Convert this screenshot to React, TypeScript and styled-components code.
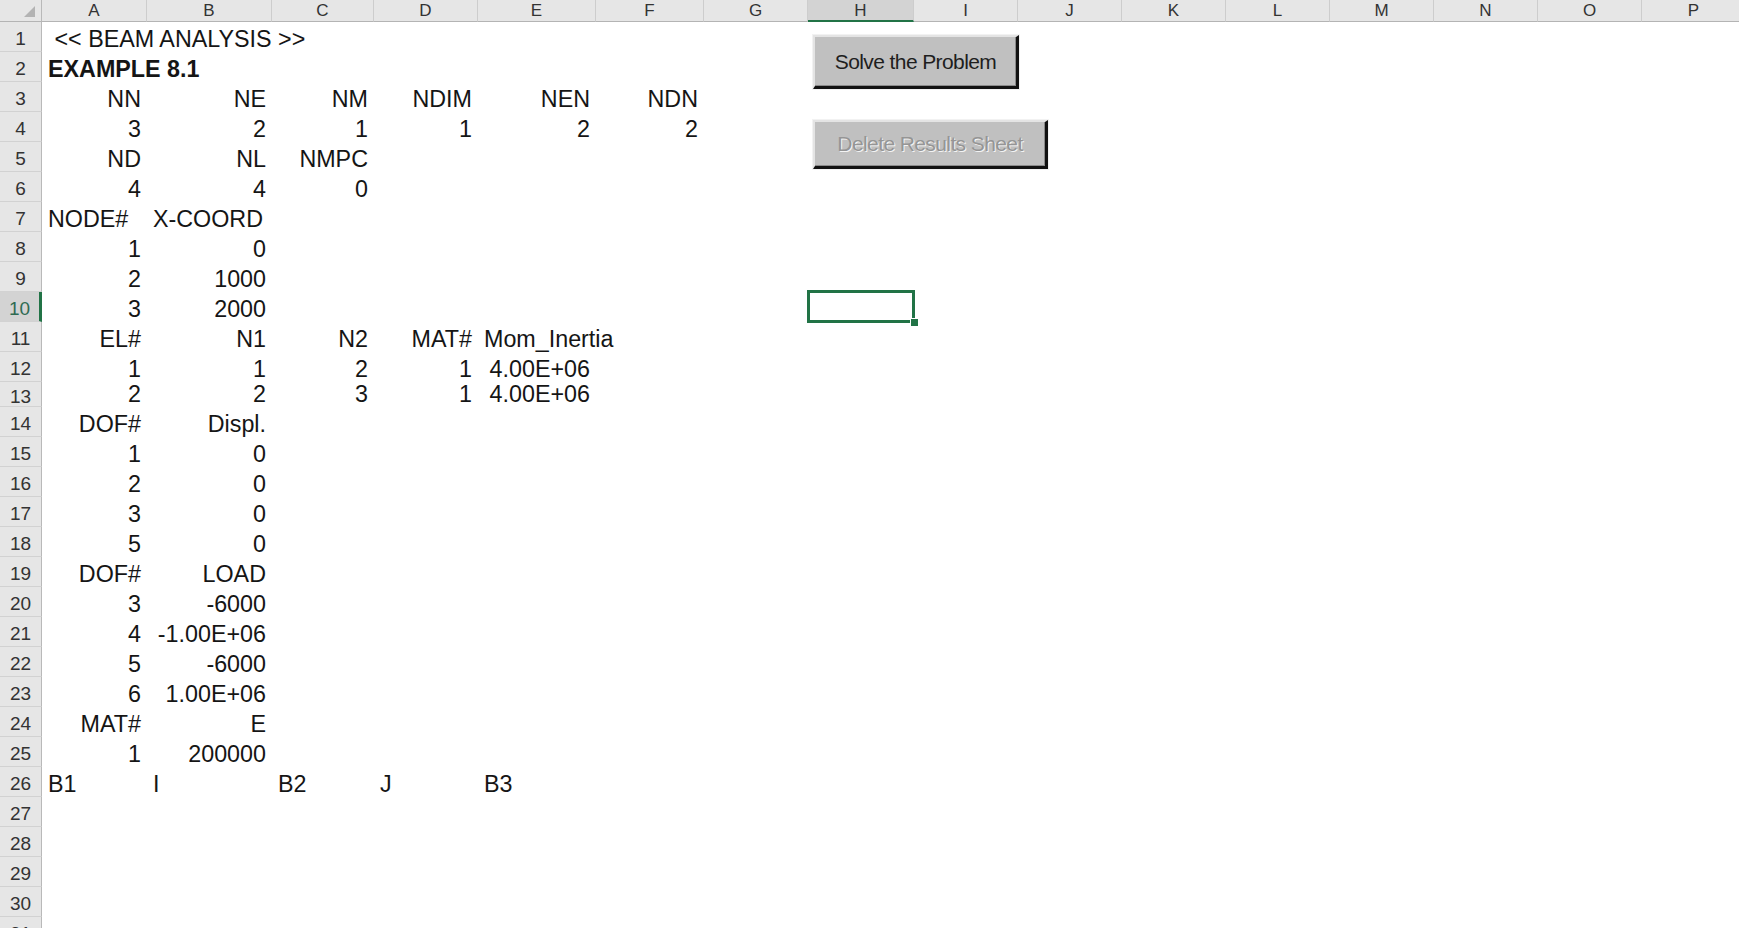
import React from "react";
import styled, { createGlobalStyle, css } from "styled-components";

type CellValue = { t: string; a: "l" | "r"; b?: boolean };

const r = (t: string): CellValue => ({ t, a: "r" });
const l = (t: string): CellValue => ({ t, a: "l" });

const COLS = ["A", "B", "C", "D", "E", "F", "G", "H", "I", "J", "K", "L", "M", "N", "O", "P"];
const WIDTHS = [105, 125, 102, 104, 118, 108, 104, 106, 104, 104, 104, 104, 104, 104, 104, 104];
const ROW_COUNT = 31;
const ACTIVE = { row: 10, col: 7 };

const data: Record<number, (CellValue | null)[]> = {
  1: [l(" << BEAM ANALYSIS >>")],
  2: [{ t: "EXAMPLE 8.1", a: "l", b: true }],
  3: [r("NN"), r("NE"), r("NM"), r("NDIM"), r("NEN"), r("NDN")],
  4: [r("3"), r("2"), r("1"), r("1"), r("2"), r("2")],
  5: [r("ND"), r("NL"), r("NMPC")],
  6: [r("4"), r("4"), r("0")],
  7: [l("NODE#"), l("X-COORD")],
  8: [r("1"), r("0")],
  9: [r("2"), r("1000")],
  10: [r("3"), r("2000")],
  11: [r("EL#"), r("N1"), r("N2"), r("MAT#"), l("Mom_Inertia")],
  12: [r("1"), r("1"), r("2"), r("1"), r("4.00E+06")],
  13: [r("2"), r("2"), r("3"), r("1"), r("4.00E+06")],
  14: [r("DOF#"), r("Displ.")],
  15: [r("1"), r("0")],
  16: [r("2"), r("0")],
  17: [r("3"), r("0")],
  18: [r("5"), r("0")],
  19: [r("DOF#"), r("LOAD")],
  20: [r("3"), r("-6000")],
  21: [r("4"), r("-1.00E+06")],
  22: [r("5"), r("-6000")],
  23: [r("6"), r("1.00E+06")],
  24: [r("MAT#"), r("E")],
  25: [r("1"), r("200000")],
  26: [l("B1"), l("I"), l("B2"), l("J"), l("B3")],
};

const rowHeight = (row: number) => (row === 13 ? 25 : 30);

const GlobalStyle = createGlobalStyle`
  html, body {
    margin: 0;
    padding: 0;
    background: #ffffff;
    overflow: hidden;
  }
  body {
    font-family: "Liberation Sans", Arial, sans-serif;
  }
`;

const Sheet = styled.div`
  position: relative;
  display: grid;
  grid-template-columns: 42px ${WIDTHS.map((w) => `${w}px`).join(" ")};
  grid-template-rows: 22px ${Array.from({ length: ROW_COUNT }, (_, i) => `${rowHeight(i + 1)}px`).join(" ")};
  width: max-content;
  background: #ffffff;
`;

const Corner = styled.div`
  background: #e6e6e6;
  border-right: 1px solid #b9b9b9;
  border-bottom: 1px solid #b4b4b4;
  display: flex;
  align-items: flex-end;
  justify-content: flex-end;
  padding: 0 6px 4px 0;
  box-sizing: border-box;
`;

const ColHead = styled.div<{ $active?: boolean }>`
  background: ${(p) => (p.$active ? "#d3d3d3" : "#e6e6e6")};
  border-right: 1px solid #cdcdcd;
  border-bottom: ${(p) => (p.$active ? "2px solid #217346" : "1px solid #b4b4b4")};
  box-sizing: border-box;
  display: flex;
  justify-content: center;
  align-items: flex-start;
  padding-top: 1px;
  font-size: 17px;
  line-height: 20px;
  color: #333333;
`;

const RowHead = styled.div<{ $active?: boolean }>`
  background: ${(p) => (p.$active ? "#d3d3d3" : "#e6e6e6")};
  border-bottom: 1px solid #d2d2d2;
  border-right: ${(p) => (p.$active ? "3px solid #217346" : "1px solid #b9b9b9")};
  box-sizing: border-box;
  display: flex;
  justify-content: center;
  align-items: center;
  padding-top: 5px;
  font-size: 19px;
  color: ${(p) => (p.$active ? "#2f6b52" : "#333333")};
`;

const Cell = styled.div<{ $align: "l" | "r"; $bold?: boolean; $active?: boolean }>`
  position: relative;
  display: flex;
  align-items: flex-end;
  justify-content: ${(p) => (p.$align === "r" ? "flex-end" : "flex-start")};
  padding: 0 6px 0 6px;
  box-sizing: border-box;
  min-width: 0;
  font-size: 23.3px;
  line-height: 27px;
  font-weight: ${(p) => (p.$bold ? 700 : 400)};
  color: #151515;
  white-space: pre;

  ${(p) =>
    p.$active &&
    css`
      &::after {
        content: "";
        position: absolute;
        top: -2px;
        left: -1px;
        right: -1px;
        bottom: -1px;
        border: 3px solid #217346;
        pointer-events: none;
        z-index: 2;
      }
      &::before {
        content: "";
        position: absolute;
        right: -5px;
        bottom: -5px;
        width: 7px;
        height: 7px;
        background: #217346;
        border: 1px solid #ffffff;
        z-index: 3;
      }
    `}
`;

const Text = styled.span`
  display: block;
  flex: none;
  margin-bottom: -1px;
`;

const MacroButton = styled.div<{ $left: number; $top: number; $width: number; $height: number; $disabled?: boolean }>`
  position: absolute;
  left: ${(p) => p.$left}px;
  top: ${(p) => p.$top}px;
  width: ${(p) => p.$width}px;
  height: ${(p) => p.$height}px;
  box-sizing: border-box;
  background: #c0c0c0;
  border-top: 2px solid #e4e4e4;
  border-left: 2px solid #e4e4e4;
  border-right: 3px solid #111111;
  border-bottom: 3px solid #111111;
  box-shadow: inset -1px -1px 0 #8a8a8a, 0 0 0 1px #f2f2f2;
  display: flex;
  align-items: center;
  justify-content: center;
  font-size: 21px;
  letter-spacing: -0.6px;
  color: ${(p) => (p.$disabled ? "#959595" : "#1e1e1e")};
  text-shadow: ${(p) => (p.$disabled ? "1px 1px 0 #f4f4f4" : "none")};
  white-space: nowrap;
  z-index: 4;
`;

const CornerMark = () => (
  <svg width="11" height="11" viewBox="0 0 11 11">
    <polygon points="11,0 11,11 0,11" fill="#b3b3b3" />
  </svg>
);

const App = () => {
  const rows = Array.from({ length: ROW_COUNT }, (_, i) => i + 1);
  return (
    <>
      <GlobalStyle />
      <Sheet>
        <Corner>
          <CornerMark />
        </Corner>
        {COLS.map((c, ci) => (
          <ColHead key={c} $active={ci === ACTIVE.col}>
            {c}
          </ColHead>
        ))}
        {rows.map((row) => (
          <React.Fragment key={row}>
            <RowHead $active={row === ACTIVE.row}>{row}</RowHead>
            {COLS.map((c, ci) => {
              const v = (data[row] || [])[ci];
              return (
                <Cell
                  key={c}
                  $align={v ? v.a : "l"}
                  $bold={v?.b}
                  $active={row === ACTIVE.row && ci === ACTIVE.col}
                >
                  {v && <Text>{v.t}</Text>}
                </Cell>
              );
            })}
          </React.Fragment>
        ))}

        <MacroButton $left={813} $top={35} $width={206} $height={54}>
          Solve the Problem
        </MacroButton>
        <MacroButton $left={813} $top={120} $width={235} $height={49} $disabled>
          Delete Results Sheet
        </MacroButton>
      </Sheet>
    </>
  );
};

export default App;
